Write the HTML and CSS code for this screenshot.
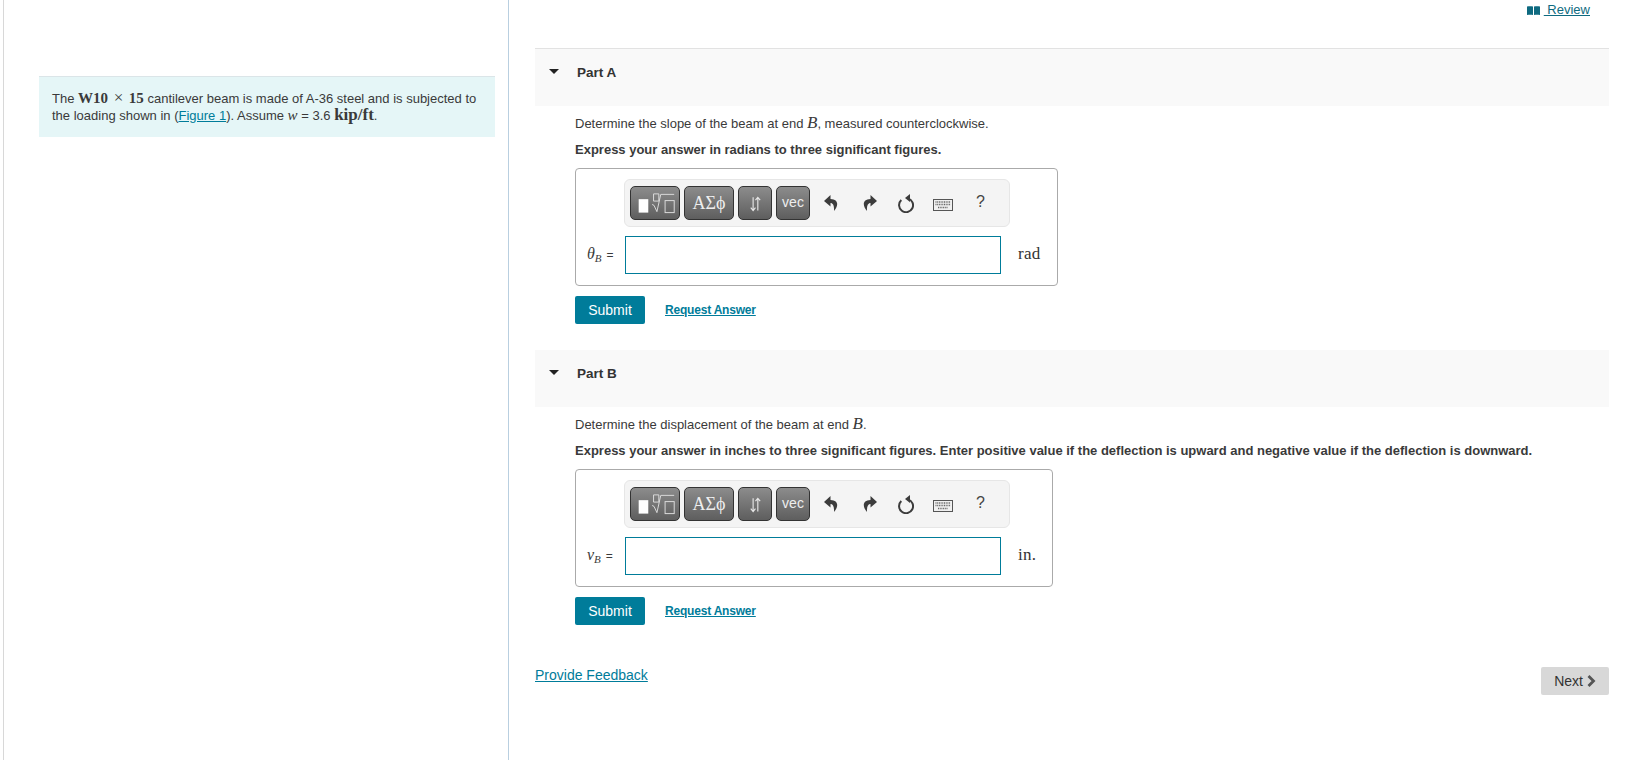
FILE: index.html
```html
<!DOCTYPE html>
<html lang="en">
<head>
<meta charset="utf-8">
<title>Cantilever beam</title>
<link rel="stylesheet" href="styles.css">
</head>
<body>
<div class="page">
  <aside class="left">
    <div class="intro">
      The <span class="m mb">W10</span> <span class="m times">×</span> <span class="m mb">15</span> cantilever beam is made of A-36 steel and is subjected to<br>
      the loading shown in (<a href="#">Figure 1</a>). Assume <span class="m mi">w</span> = 3.6 <span class="m mb kip">kip/ft</span>.
    </div>
  </aside>
  <main class="right">
    <div class="review"><a class="review-link" href="#"><svg class="book" viewBox="0 0 13 9" width="13" height="9"><path d="M0 0.500C2 0 4 0 6 .5V9C4 8.500 2 8.500 0 9zM7 .5C9 0 11 0 13 .5V9C11 8.500 9 8.500 7 9z"/></svg><span class="review-text">&nbsp;Review</span></a></div>

    <section class="part">
      <header class="part-head ruled"><span class="tri"></span><span class="part-title">Part A</span></header>
      <div class="part-body">
        <p class="q">Determine the slope of the beam at end <span class="m mi big">B</span>, measured counterclockwise.</p>
        <p class="q strong">Express your answer in radians to three significant figures.</p>
        <div class="answer a-wide">
          <div class="toolbar">
            <div class="tb-btn b1"><svg viewBox="0 0 50 34" width="50" height="34"><rect x="8" y="13" width="10" height="14" fill="#fff"/><path d="M22 18.500l2 1 3 6.500 4-18h14M23.500 7.500h5.500v7.500h-5.500z" fill="none" stroke="#ddd"/><rect x="35.500" y="14.500" width="9.500" height="12.500" fill="none" stroke="#ddd"/></svg></div>
            <div class="tb-btn b2">ΑΣϕ</div>
            <div class="tb-btn b3"><svg viewBox="0 0 34 34" width="34" height="34"><path d="M15 11v14M12.500 22l2.500 3 2.500-3M20 25V11M17.500 14l2.500-3 2.500 3" fill="none" stroke="#e8e8e8" stroke-width="1.200"/></svg></div>
            <div class="tb-btn b4">vec</div>
            <svg class="tool t-undo" viewBox="0 0 14 16" width="14" height="16"><path d="M6.500 0L0 6l6.500 5.500V8c2.500 0 3.800 2.500 3.500 8C14.500 11 15 4.300 6.500 4z" fill="#3c3c3c"/></svg>
            <svg class="tool t-redo" viewBox="0 0 14 16" width="14" height="16"><path d="M7.500 0L14 6l-6.500 5.500V8C5 8 3.700 10.500 4 16-.5 11-1 4.300 7.500 4z" fill="#3c3c3c"/></svg>
            <svg class="tool t-reload" viewBox="0 0 16 19" width="16" height="19"><path d="M10 4.400A7 7 0 1 1 3.300 6" fill="none" stroke="#3c3c3c" stroke-width="2"/><path d="M7 4l5-4v8z" fill="#3c3c3c"/></svg>
            <svg class="tool t-kbd" viewBox="0 0 20 12" width="20" height="12"><rect x=".5" y=".5" width="19" height="11" fill="#f0f0f0" stroke="#555"/><path d="M2.500 3h15M2.500 5.500h15M5 8.500h10" stroke="#666" stroke-width="1.400" stroke-dasharray="1 .7"/></svg>
            <span class="help">?</span>
          </div>
          <div class="row">
            <span class="label"><span class="m mi lab">θ<sub>B</sub></span><span class="eq">=</span></span>
            <div class="input"></div>
            <span class="unit">rad</span>
          </div>
        </div>
        <div class="actions"><button class="submit">Submit</button><a class="req" href="#">Request Answer</a></div>
      </div>
    </section>

    <section class="part">
      <header class="part-head"><span class="tri"></span><span class="part-title">Part B</span></header>
      <div class="part-body">
        <p class="q">Determine the displacement of the beam at end <span class="m mi big">B</span>.</p>
        <p class="q strong">Express your answer in inches to three significant figures. Enter positive value if the deflection is upward and negative value if the deflection is downward.</p>
        <div class="answer a-narrow">
          <div class="toolbar">
            <div class="tb-btn b1"><svg viewBox="0 0 50 34" width="50" height="34"><rect x="8" y="13" width="10" height="14" fill="#fff"/><path d="M22 18.500l2 1 3 6.500 4-18h14M23.500 7.500h5.500v7.500h-5.500z" fill="none" stroke="#ddd"/><rect x="35.500" y="14.500" width="9.500" height="12.500" fill="none" stroke="#ddd"/></svg></div>
            <div class="tb-btn b2">ΑΣϕ</div>
            <div class="tb-btn b3"><svg viewBox="0 0 34 34" width="34" height="34"><path d="M15 11v14M12.500 22l2.500 3 2.500-3M20 25V11M17.500 14l2.500-3 2.500 3" fill="none" stroke="#e8e8e8" stroke-width="1.200"/></svg></div>
            <div class="tb-btn b4">vec</div>
            <svg class="tool t-undo" viewBox="0 0 14 16" width="14" height="16"><path d="M6.500 0L0 6l6.500 5.500V8c2.500 0 3.800 2.500 3.500 8C14.500 11 15 4.300 6.500 4z" fill="#3c3c3c"/></svg>
            <svg class="tool t-redo" viewBox="0 0 14 16" width="14" height="16"><path d="M7.500 0L14 6l-6.500 5.500V8C5 8 3.700 10.500 4 16-.5 11-1 4.300 7.500 4z" fill="#3c3c3c"/></svg>
            <svg class="tool t-reload" viewBox="0 0 16 19" width="16" height="19"><path d="M10 4.400A7 7 0 1 1 3.300 6" fill="none" stroke="#3c3c3c" stroke-width="2"/><path d="M7 4l5-4v8z" fill="#3c3c3c"/></svg>
            <svg class="tool t-kbd" viewBox="0 0 20 12" width="20" height="12"><rect x=".5" y=".5" width="19" height="11" fill="#f0f0f0" stroke="#555"/><path d="M2.500 3h15M2.500 5.500h15M5 8.500h10" stroke="#666" stroke-width="1.400" stroke-dasharray="1 .7"/></svg>
            <span class="help">?</span>
          </div>
          <div class="row">
            <span class="label"><span class="m mi lab">v<sub>B</sub></span><span class="eq">=</span></span>
            <div class="input"></div>
            <span class="unit">in.</span>
          </div>
        </div>
        <div class="actions"><button class="submit">Submit</button><a class="req" href="#">Request Answer</a></div>
      </div>
    </section>

    <footer class="foot">
      <a class="feedback" href="#">Provide Feedback</a>
      <button class="next">Next <svg viewBox="0 0 9 12" width="9" height="12"><path d="M1.500 1l5 5-5 5" fill="none" stroke="#555" stroke-width="2.800"/></svg></button>
    </footer>
  </main>
</div>
</body>
</html>
```
FILE: styles.css
```css
* { box-sizing: border-box; }
html, body { margin: 0; height: 100%; background: #fff; }
body { font-family: "Liberation Sans", Arial, sans-serif; font-size: 13px; color: #3a3a3a; overflow: hidden; }
a { color: #007c9a; }
.page { display: flex; height: 760px; padding-left: 3px; }
.left { width: 506px; flex: none; border-left: 1px solid #d8d8d8; border-right: 1px solid #b9cfe0; padding: 76px 13px 0 35px; }
.intro { height: 61px; background: #e5f6f7; border-top: 1px solid #dbe5e8; padding: 13px 0 0 13px; font-size: 13px; line-height: 17px; white-space: nowrap; }
.m { font-family: "Liberation Serif", "DejaVu Serif", serif; font-size: 15px; line-height: 0; }
.mb { font-weight: bold; }
.mi { font-style: italic; }
.times { font-size: 17px; margin: 0 2px; }
.kip { font-size: 17px; }
.big { font-size: 17px; }
.right { flex: 1; padding: 0 25px 0 26px; }
.review { height: 48px; text-align: right; padding: 2px 19px 0 0; font-size: 13px; line-height: 15px; }
.review-link { color: #0e6a80; text-decoration: none; }
.review-text { text-decoration: underline; }
.book { fill: #0e6a80; vertical-align: -1px; margin-right: 4px; }
.part-head { height: 58px; background: #f9f9f9; background-clip: padding-box; border-top: 1px solid transparent; display: flex; align-items: flex-start; padding: 15px 0 0 14px; }
.ruled { border-top-color: #e2e2e2; }
.tri { width: 0; height: 0; border-left: 5.500px solid transparent; border-right: 5.500px solid transparent; border-top: 5.500px solid #222; margin-top: 5px; }
.part-title { font-weight: bold; font-size: 13.500px; line-height: 16px; margin: 1px 0 0 18px; color: #333; }
.part-body { padding: 0 0 0 40px; }
.q { margin: 0; line-height: 16px; padding-top: 10px; height: 26px; white-space: nowrap; }
.part-body .q:first-child { padding-top: 10px; height: 26px; }
.strong { font-weight: bold; }
.answer { margin-top: 10px; height: 118px; border: 1px solid #aaa; border-radius: 4px; padding-top: 10px; }
.a-wide { width: 483px; }
.a-narrow { width: 478px; }
.toolbar { width: 386px; height: 48px; margin-left: 48px; background: #f4f4f4; border: 1px solid #e6e6e6; border-radius: 6px; display: flex; align-items: center; padding-left: 5px; }
.tb-btn { height: 34px; margin-right: 4px; flex: none; border: 1px solid #333; border-radius: 5px; background: linear-gradient(#8c8c8c, #5e5e5e); color: #eee; display: flex; align-items: center; justify-content: center; overflow: hidden; }
.b1 { width: 50px; }
.b2 { width: 50px; font-family: "Liberation Serif", serif; font-size: 18px; }
.b3 { width: 34px; }
.b4 { width: 34px; margin-right: 0; font-size: 14px; padding-bottom: 2px; }
.tool { flex: none; }
.t-undo { margin-left: 14px; }
.t-redo { margin-left: 25px; }
.t-reload { margin-left: 21px; }
.t-kbd { margin-left: 19px; margin-top: 4px; }
.help { margin-left: 23px; font-size: 16px; color: #444; padding-bottom: 2px; }
.row { display: flex; align-items: center; margin-top: 9px; }
.label { width: 49px; padding: 0 0 2px 11px; flex: none; white-space: nowrap; display: flex; align-items: baseline; }
.lab { font-size: 16px; line-height: 1; }
.lab sub { font-size: 11px; line-height: 0; vertical-align: -3px; }
.eq { margin-left: 5px; font-size: 12px; }
.input { width: 376px; height: 38px; background: #fff; border: 1px solid #007c9a; }
.unit { margin: 0 0 3px 17px; font-family: "Liberation Serif", serif; font-size: 17px; letter-spacing: .3px; color: #333; }
.actions { display: flex; align-items: center; margin-top: 10px; height: 28px; }
.submit { width: 70px; height: 28px; background: #007c9a; color: #fff; border: 0; border-radius: 2px; padding: 0; font: 14px "Liberation Sans", Arial, sans-serif; }
.req { margin: 0 0 0 20px; font-weight: bold; font-size: 12px; letter-spacing: -.2px; }
.part + .part { margin-top: 25px; }
.foot { display: flex; justify-content: space-between; align-items: flex-start; margin-top: 40px; }
.feedback { font-size: 14px; margin-top: 2px; }
.next { width: 68px; height: 28px; background: #d8d8d8; border: 0; border-radius: 2px; padding: 0; font: 14px "Liberation Sans", Arial, sans-serif; color: #333; margin-top: 2px; }
.next svg { vertical-align: -1px; }
```
